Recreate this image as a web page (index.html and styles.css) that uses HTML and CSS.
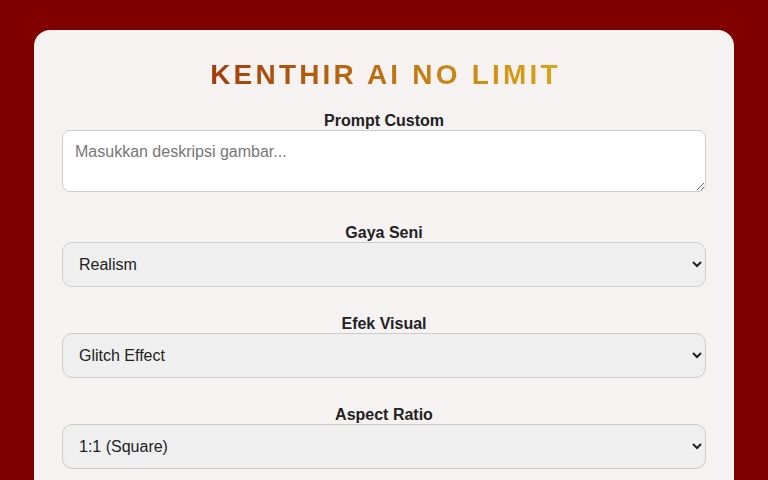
FILE: index.html
```html
<!DOCTYPE html>
<html lang="id">
<head>
<meta charset="utf-8">
<title>Kenthir AI No Limit</title>
<link rel="stylesheet" href="styles.css">
</head>
<body>
<div class="card">
  <h1 class="title">KENTHIR AI NO LIMIT</h1>
  <div class="group group-text">
    <label class="label" for="prompt">Prompt Custom</label>
    <textarea id="prompt" class="textarea" placeholder="Masukkan deskripsi gambar..."></textarea>
  </div>
  <div class="group">
    <label class="label" for="style">Gaya Seni</label>
    <select id="style" class="select">
      <option>Realism</option>
      <option>Anime</option>
    </select>
  </div>
  <div class="group">
    <label class="label" for="effect">Efek Visual</label>
    <select id="effect" class="select">
      <option>Glitch Effect</option>
      <option>None</option>
    </select>
  </div>
  <div class="group">
    <label class="label" for="ratio">Aspect Ratio</label>
    <select id="ratio" class="select">
      <option>1:1 (Square)</option>
      <option>16:9 (Landscape)</option>
    </select>
  </div>
</div>
</body>
</html>
```

FILE: styles.css
```css
html, body {
  margin: 0;
  padding: 0;
}
body {
  background: #800000;
  font-family: "Liberation Sans", Arial, sans-serif;
  padding: 30px 0;
}
.card {
  width: 700px;
  box-sizing: border-box;
  margin: 0 auto;
  background: #f7f2f2;
  border-radius: 16px;
  padding: 29px 28px 28px;
}
.title {
  margin: 0 auto 21px;
  font-size: 28px;
  font-weight: bold;
  letter-spacing: 3.2px;
  text-align: center;
  background: linear-gradient(90deg, #a13c0b 0%, #dba618 100%);
  -webkit-background-clip: text;
  background-clip: text;
  color: transparent;
  width: max-content;
  padding-left: 3px;
}
.group {
  margin-bottom: 28px;
}
.group-text {
  margin-bottom: 32px;
}
.label {
  display: block;
  text-align: center;
  font-weight: bold;
  font-size: 16px;
  color: #222;
}
.textarea {
  display: block;
  width: 100%;
  height: 62px;
  box-sizing: border-box;
  padding: 12px;
  border: 1px solid #ccc;
  border-radius: 8px;
  background: #fff;
  font-family: "Liberation Sans", Arial, sans-serif;
  font-size: 16px;
  color: #222;
  margin: 0;
}
.textarea::placeholder {
  color: #777;
}
.select {
  display: block;
  width: 100%;
  height: 45px;
  box-sizing: border-box;
  padding: 12px;
  border: 1px solid #ccc;
  border-radius: 10px;
  background-color: #efefef;
  font-family: "Liberation Sans", Arial, sans-serif;
  font-size: 16px;
  color: #222;
  margin: 0;
}
```
